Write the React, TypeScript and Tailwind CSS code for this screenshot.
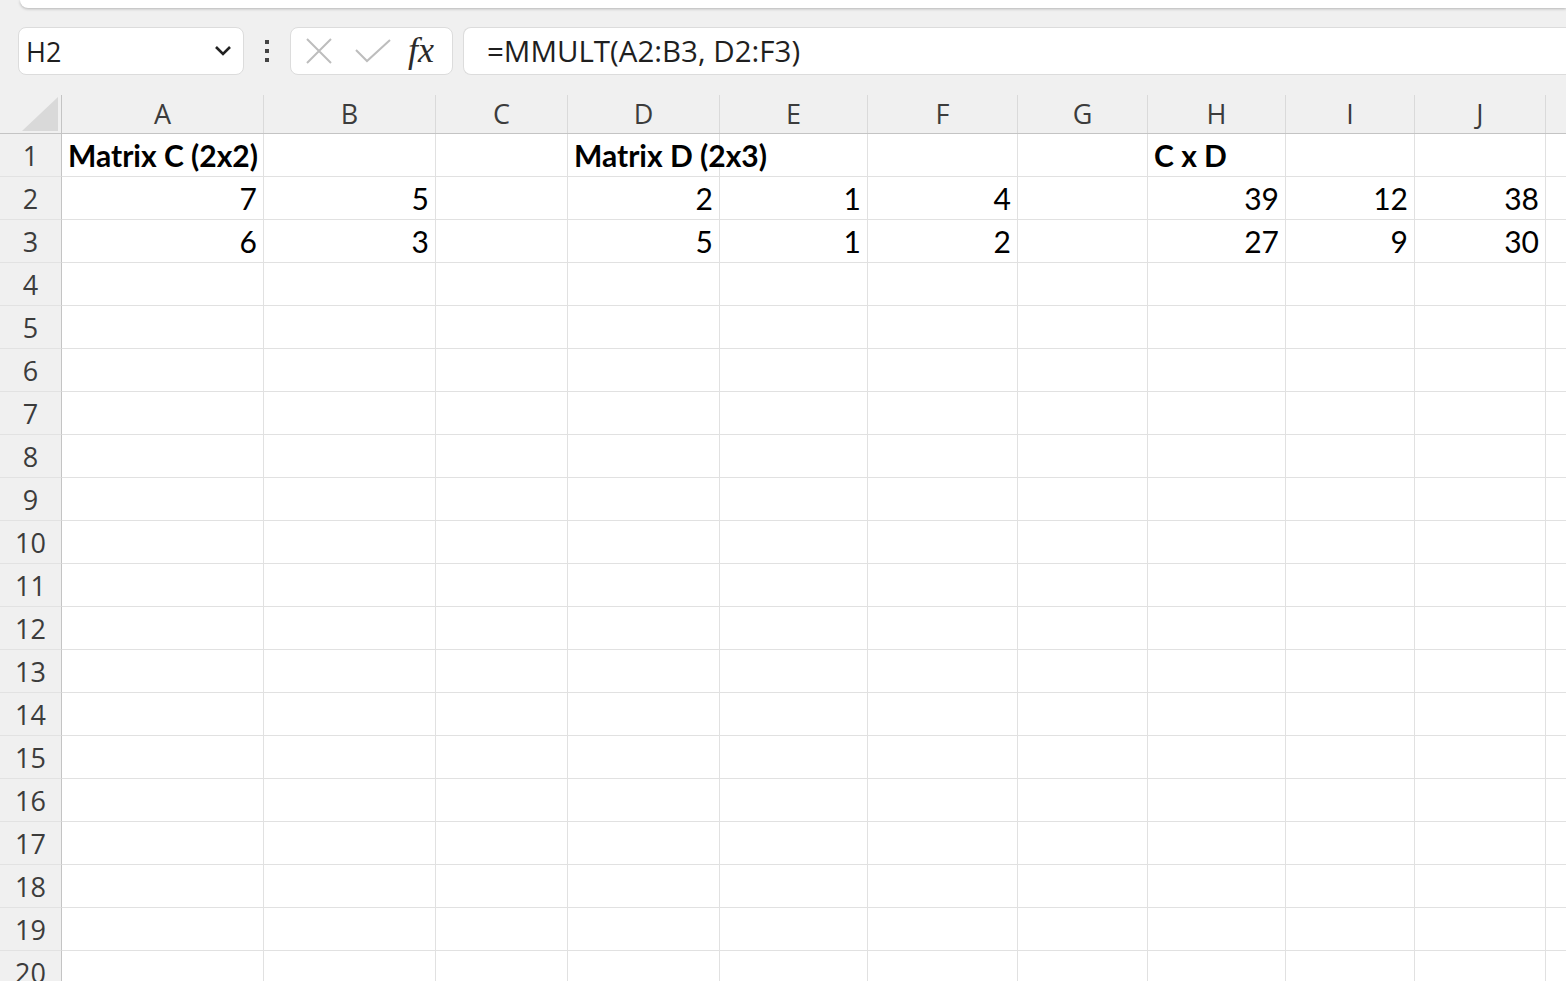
import React from "react";

const cols = [
  { name: "A", w: 202 },
  { name: "B", w: 172 },
  { name: "C", w: 132 },
  { name: "D", w: 152 },
  { name: "E", w: 148 },
  { name: "F", w: 150 },
  { name: "G", w: 130 },
  { name: "H", w: 138 },
  { name: "I", w: 129 },
  { name: "J", w: 131 },
  { name: "K", w: 21 },
];

type Cell = { v: string; bold?: boolean; num?: boolean };

const data: Record<number, Record<number, Cell>> = {
  1: {
    0: { v: "Matrix C (2x2)", bold: true },
    3: { v: "Matrix D (2x3)", bold: true },
    7: { v: "C x D", bold: true },
  },
  2: {
    0: { v: "7", num: true },
    1: { v: "5", num: true },
    3: { v: "2", num: true },
    4: { v: "1", num: true },
    5: { v: "4", num: true },
    7: { v: "39", num: true },
    8: { v: "12", num: true },
    9: { v: "38", num: true },
  },
  3: {
    0: { v: "6", num: true },
    1: { v: "3", num: true },
    3: { v: "5", num: true },
    4: { v: "1", num: true },
    5: { v: "2", num: true },
    7: { v: "27", num: true },
    8: { v: "9", num: true },
    9: { v: "30", num: true },
  },
};

const rows = Array.from({ length: 20 }, (_, i) => i + 1);

const ui = { fontFamily: '"Open Sans", "Noto Sans", sans-serif' };
const cellFont = { fontFamily: 'Lato, "Liberation Sans", sans-serif' };

function FormulaBar() {
  return (
    <div className="h-[95px] bg-[#f0f0f0] relative">
      <div className="absolute left-[20px] right-0 top-0 h-[8px] bg-white rounded-bl-[10px] shadow-[0_1px_3px_rgba(0,0,0,0.25)]" />
      <div className="flex items-center pt-[27px] pl-[18px]">
        <div
          className="w-[226px] h-[48px] bg-white border border-[#dcdcdc] rounded-[8px] flex items-center justify-between pl-[7px] pr-[10px]"
          style={ui}
        >
          <span className="text-[27px] text-[#1f1f1f] leading-none">H2</span>
          <svg width="20" height="12" viewBox="0 0 20 12">
            <path d="M3 2 L10 9 L17 2" fill="none" stroke="#222" strokeWidth="2.6" />
          </svg>
        </div>
        <div className="w-[46px] flex flex-col items-center gap-[5px]">
          <div className="w-[4px] h-[4px] bg-[#444]" />
          <div className="w-[4px] h-[4px] bg-[#444]" />
          <div className="w-[4px] h-[4px] bg-[#444]" />
        </div>
        <div className="w-[163px] h-[48px] bg-white border border-[#dcdcdc] rounded-[8px] flex items-center pl-[13px]">
          <svg width="30" height="30" viewBox="0 0 30 30">
            <path d="M3 3 L27 27 M27 3 L3 27" stroke="#bdbdbd" strokeWidth="2" />
          </svg>
          <svg width="38" height="30" viewBox="0 0 38 30" className="ml-[20px]">
            <path d="M2 14 L13 25 L36 4" fill="none" stroke="#bdbdbd" strokeWidth="2" />
          </svg>
          <span
            className="ml-[16px] text-[36px] italic text-[#2b2b2b] leading-none pb-[2px]"
            style={{ fontFamily: '"Liberation Serif", "DejaVu Serif", serif' }}
          >
            fx
          </span>
        </div>
        <div
          className="ml-[10px] flex-1 h-[48px] bg-white border border-r-0 border-[#dcdcdc] rounded-l-[8px] flex items-center pl-[23px]"
          style={ui}
        >
          <span className="text-[29.5px] text-[#1f1f1f] leading-none">=MMULT(A2:B3, D2:F3)</span>
        </div>
      </div>
    </div>
  );
}

function Grid() {
  return (
    <div className="bg-white">
      <div className="flex h-[39px] bg-[#f0f0f0] border-b border-[#c4c4c4]">
        <div className="w-[62px] shrink-0 border-r border-[#c4c4c4] relative flex items-end justify-end pr-[3px] pb-[2px]">
          <svg width="36" height="34" viewBox="0 0 36 34">
            <path d="M36 0 L36 34 L0 34 Z" fill="#d9d9d9" />
          </svg>
        </div>
        {cols.map((c) => (
          <div
            key={c.name}
            className="shrink-0 border-r border-[#dadada] flex items-center justify-center text-[27px] text-[#3c3c3c] pt-[1px] overflow-hidden"
            style={{ ...ui, width: c.w }}
          >
            {c.name === "K" ? "" : c.name}
          </div>
        ))}
      </div>
      {rows.map((r) => (
        <div key={r} className="flex h-[43px]">
          <div
            className="w-[62px] shrink-0 bg-[#f0f0f0] border-r border-[#c4c4c4] border-b border-b-[#e2e2e2] flex items-center justify-center text-[27px] text-[#3c3c3c] pt-[3px]"
            style={ui}
          >
            {r}
          </div>
          {cols.map((c, ci) => {
            const cell = data[r]?.[ci];
            return (
              <div
                key={c.name}
                className={
                  "shrink-0 border-r border-b border-[#e1e1e1] flex items-end pb-[2px] px-[6px] text-[30px] text-black leading-none whitespace-nowrap overflow-visible " +
                  (cell?.num ? "justify-end" : "justify-start") +
                  (cell?.bold ? " font-bold" : "")
                }
                style={{ ...cellFont, width: c.w }}
              >
                <span className="pb-[4px]">{cell?.v ?? ""}</span>
              </div>
            );
          })}
        </div>
      ))}
    </div>
  );
}

export default function App() {
  return (
    <div className="w-[1566px] h-[981px] overflow-hidden bg-white">
      <FormulaBar />
      <Grid />
    </div>
  );
}
